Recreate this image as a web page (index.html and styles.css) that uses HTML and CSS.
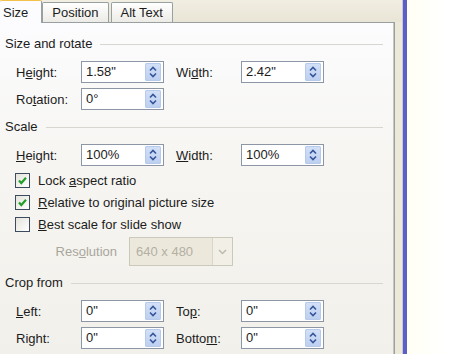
FILE: index.html
```html
<!DOCTYPE html>
<html lang="en">
<head>
    <meta charset="UTF-8">
    <title>Size and Position</title>
    <link rel="stylesheet" href="styles.css">
</head>
<body>
    <div class="screen">
        <div class="dialog">
            <!-- Schede in alto -->
            <div class="tabs">
                <div class="tab tab-active">Size</div>
                <div class="tab">Position</div>
                <div class="tab tab-alt">Alt Text</div>
            </div>

            <div class="panel">
                <div class="group-title"><span>Size and rotate</span><i></i></div>
                <div class="fields">
                    <label>H<u>e</u>ight:</label>
                    <div class="spin"><span class="spin-value">1.58"</span><span class="spin-btn"><svg width="8" height="12" viewBox="0 0 8 12"><path d="M1 4.5 4 1.5 7 4.5M1 7.5 4 10.5 7 7.5" fill="none" stroke="#35569a" stroke-width="1.6"/></svg></span></div>
                    <label class="col2">Wi<u>d</u>th:</label>
                    <div class="spin"><span class="spin-value">2.42"</span><span class="spin-btn"><svg width="8" height="12" viewBox="0 0 8 12"><path d="M1 4.5 4 1.5 7 4.5M1 7.5 4 10.5 7 7.5" fill="none" stroke="#35569a" stroke-width="1.6"/></svg></span></div>
                    <label>Ro<u>t</u>ation:</label>
                    <div class="spin"><span class="spin-value">0°</span><span class="spin-btn"><svg width="8" height="12" viewBox="0 0 8 12"><path d="M1 4.5 4 1.5 7 4.5M1 7.5 4 10.5 7 7.5" fill="none" stroke="#35569a" stroke-width="1.6"/></svg></span></div>
                </div>

                <div class="group-title"><span>Scale</span><i></i></div>
                <div class="fields">
                    <label><u>H</u>eight:</label>
                    <div class="spin"><span class="spin-value">100%</span><span class="spin-btn"><svg width="8" height="12" viewBox="0 0 8 12"><path d="M1 4.5 4 1.5 7 4.5M1 7.5 4 10.5 7 7.5" fill="none" stroke="#35569a" stroke-width="1.6"/></svg></span></div>
                    <label class="col2"><u>W</u>idth:</label>
                    <div class="spin"><span class="spin-value">100%</span><span class="spin-btn"><svg width="8" height="12" viewBox="0 0 8 12"><path d="M1 4.5 4 1.5 7 4.5M1 7.5 4 10.5 7 7.5" fill="none" stroke="#35569a" stroke-width="1.6"/></svg></span></div>
                </div>

                <div class="checks">
                    <div class="check-row"><span class="box"><svg width="11" height="11" viewBox="0 0 11 11"><path d="M2 5.5 4.3 8 9 2.8" fill="none" stroke="#22a02a" stroke-width="2.2"/></svg></span><span>Lock <u>a</u>spect ratio</span></div>
                    <div class="check-row"><span class="box"><svg width="11" height="11" viewBox="0 0 11 11"><path d="M2 5.5 4.3 8 9 2.8" fill="none" stroke="#22a02a" stroke-width="2.2"/></svg></span><span><u>R</u>elative to original picture size</span></div>
                    <div class="check-row"><span class="box"></span><span><u>B</u>est scale for slide show</span></div>
                </div>

                <div class="resolution">
                    <label>Res<u>o</u>lution</label>
                    <div class="combo">
                        <span class="combo-value">640 x 480</span>
                        <span class="combo-btn"><svg width="9" height="6" viewBox="0 0 9 6"><path d="M1 1 4.5 4.5 8 1" fill="none" stroke="#bdb9ad" stroke-width="1.5"/></svg></span>
                    </div>
                </div>

                <div class="group-title"><span>Crop from</span><i></i></div>
                <div class="fields">
                    <label><u>L</u>eft:</label>
                    <div class="spin"><span class="spin-value">0"</span><span class="spin-btn"><svg width="8" height="12" viewBox="0 0 8 12"><path d="M1 4.5 4 1.5 7 4.5M1 7.5 4 10.5 7 7.5" fill="none" stroke="#35569a" stroke-width="1.6"/></svg></span></div>
                    <label class="col2">To<u>p</u>:</label>
                    <div class="spin"><span class="spin-value">0"</span><span class="spin-btn"><svg width="8" height="12" viewBox="0 0 8 12"><path d="M1 4.5 4 1.5 7 4.5M1 7.5 4 10.5 7 7.5" fill="none" stroke="#35569a" stroke-width="1.6"/></svg></span></div>
                    <label>Ri<u>g</u>ht:</label>
                    <div class="spin"><span class="spin-value">0"</span><span class="spin-btn"><svg width="8" height="12" viewBox="0 0 8 12"><path d="M1 4.5 4 1.5 7 4.5M1 7.5 4 10.5 7 7.5" fill="none" stroke="#35569a" stroke-width="1.6"/></svg></span></div>
                    <label class="col2">Botto<u>m</u>:</label>
                    <div class="spin"><span class="spin-value">0"</span><span class="spin-btn"><svg width="8" height="12" viewBox="0 0 8 12"><path d="M1 4.5 4 1.5 7 4.5M1 7.5 4 10.5 7 7.5" fill="none" stroke="#35569a" stroke-width="1.6"/></svg></span></div>
                </div>
            </div>
        </div>
        <div class="edge"></div>
        <div class="backdrop"></div>
    </div>
</body>
</html>
```

FILE: styles.css
```css
body {
    margin: 0;
    font-family: 'Liberation Sans', Arial, sans-serif;
    font-size: 13px;
    color: #1c1c1c;
    background: #ffffff;
}
.screen {
    display: flex;
    height: 354px;
    overflow: hidden;
}
.dialog {
    width: 403px;
    flex: none;
    display: flex;
    flex-direction: column;
    background: #ece9d9;
}

/* schede */
.tabs {
    display: flex;
    align-items: flex-end;
    height: 22px;
    background: linear-gradient(#f1eee2, #e9e5d6);
}
.tab {
    height: 19px;
    line-height: 19px;
    padding: 0 9px;
    border: 1px solid #98a0a2;
    border-bottom: none;
    border-radius: 2px 2px 0 0;
    background: linear-gradient(#ffffff, #ecebe6);
    position: relative;
}
.tab-active {
    height: 22px;
    line-height: 24px;
    padding: 0 13px 0 3px;
    border-left: none;
    border-top: 1px solid #f4c24a;
    margin-bottom: -1px;
    background: #fcfcfe;
    z-index: 1;
}
.tab-alt {
    margin-left: 2px;
}

.panel {
    width: 394px;
    flex: 1;
    border-top: 1px solid #98a0a2;
    border-right: 1px solid #98a0a2;
    box-shadow: inset -1px 0 0 #c8c7c0;
    background: linear-gradient(#fcfcfe, #f6f5f1 45%, #f1f0eb);
}

.group-title {
    display: flex;
    align-items: center;
    gap: 8px;
    height: 16px;
    line-height: 16px;
    margin: 13px 11px 0 5px;
}
.group-title + .fields {
    margin-top: 9px;
}
.fields + .group-title {
    margin-top: 9px;
}
.resolution + .group-title {
    margin-top: 9px;
}
.group-title i {
    flex: 1;
    height: 1px;
    background: #d7d6d0;
}
.group-title:last-of-type + .fields {
    margin-top: 8px;
}

.fields {
    display: grid;
    grid-template-columns: 65px 83px 77px 83px;
    grid-auto-rows: 22px;
    row-gap: 5px;
    margin-left: 16px;
    align-items: center;
}
.fields .col2 {
    padding-left: 12px;
}
.spin {
    display: flex;
    height: 22px;
    box-sizing: border-box;
    border: 1px solid #8c96a4;
    background: #ffffff;
}
.spin-value {
    flex: 1;
    line-height: 20px;
    padding-left: 4px;
}
.spin-btn {
    width: 16px;
    margin: 1px 2px 1px 0;
    border-radius: 2px;
    background: linear-gradient(#d3e1f7, #bccff0);
    box-shadow: inset 0 0 0 1px #b8caec;
    display: flex;
    align-items: center;
    justify-content: center;
}

.checks {
    margin: 3px 0 0 15px;
}
.check-row {
    display: flex;
    align-items: center;
    gap: 8px;
    height: 22px;
}
.box {
    width: 13px;
    height: 13px;
    border: 1px solid #3c4c5e;
    background: linear-gradient(135deg, #e4e3dc, #ffffff);
    display: flex;
    align-items: center;
    justify-content: center;
}

.resolution {
    display: flex;
    align-items: center;
    margin-top: 2px;
}
.resolution label {
    width: 117px;
    text-align: right;
    padding-right: 12px;
    box-sizing: content-box;
    color: #a9a69c;
}
.combo {
    display: flex;
    width: 104px;
    height: 29px;
    box-sizing: border-box;
    border: 1px solid #cbc8bc;
    background: #ece9dc;
    color: #b3afa3;
}
.combo-value {
    flex: 1;
    line-height: 27px;
    padding-left: 6px;
}
.combo-btn {
    width: 19px;
    border-left: 1px solid #d9d6cb;
    background: #f1efe6;
    display: flex;
    align-items: center;
    justify-content: center;
}

.edge {
    width: 4px;
    flex: none;
    background: #5b5fc6;
    box-shadow: 1px 0 0 #a7aae0, -1px 0 0 #c9c6d8;
}
.backdrop {
    flex: 1;
    background: linear-gradient(90deg, #fffff4, #ffffff 40px);
}
```
